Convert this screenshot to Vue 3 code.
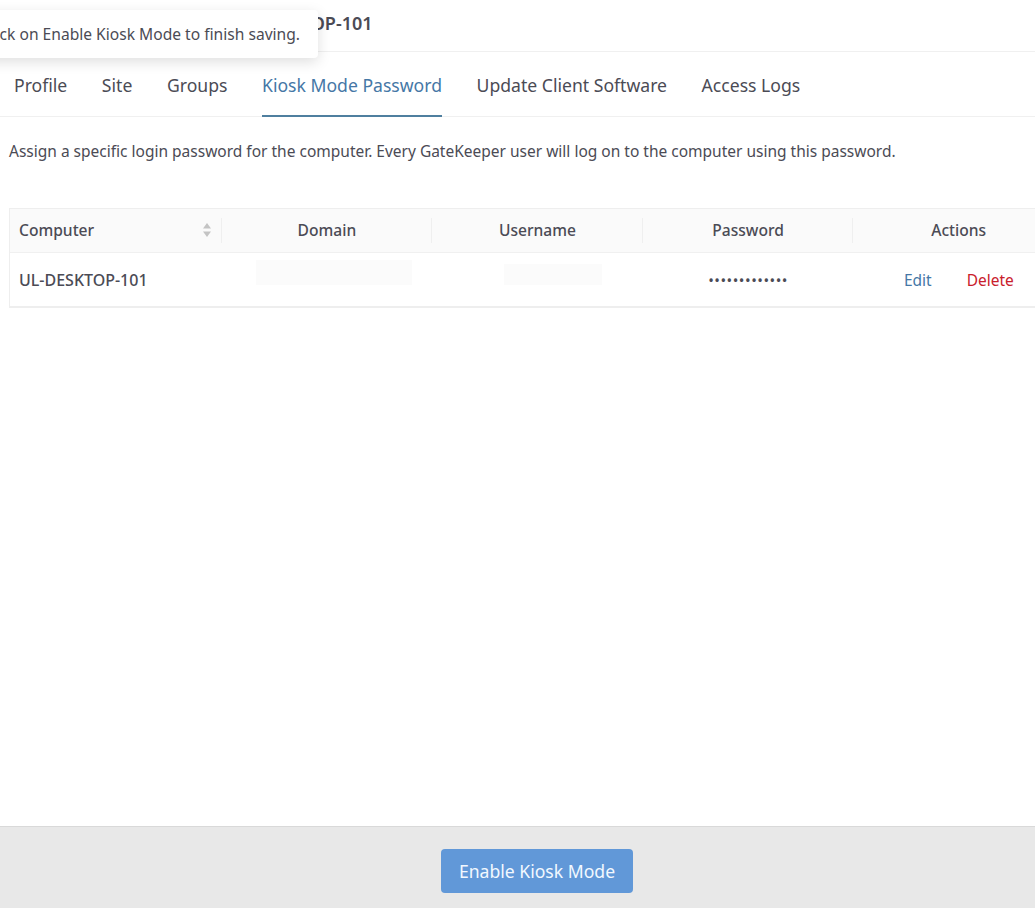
<script setup>
const tabs = ['Profile', 'Site', 'Groups', 'Kiosk Mode Password', 'Update Client Software', 'Access Logs']
const activeTab = 'Kiosk Mode Password'
const columns = ['Domain', 'Username', 'Password', 'Actions']
</script>

<template>
  <div class="viewport">
    <div class="page">
      <div class="toast">Click on Enable Kiosk Mode to finish saving.</div>

      <header class="title-bar">UL-DESKTOP-101</header>

      <nav class="tabs">
        <a v-for="tab in tabs" :key="tab" :class="['tab', { active: tab === activeTab }]">{{ tab }}</a>
      </nav>

      <main class="content">
        <p class="intro">Assign a specific login password for the computer. Every GateKeeper user will log on to the computer using this password.</p>

        <div class="table">
          <div class="row head">
            <div class="cell first">
              <span>Computer</span>
              <svg class="sorter" width="10" height="16" viewBox="0 0 10 16">
                <path d="M5 1 L9 6.5 H1 Z" />
                <path d="M5 15 L9 9.5 H1 Z" />
              </svg>
            </div>
            <div v-for="col in columns" :key="col" class="cell">{{ col }}</div>
          </div>
          <div class="row body">
            <div class="cell first name">UL-DESKTOP-101</div>
            <div class="cell"><span class="masked domain"></span></div>
            <div class="cell"><span class="masked user"></span></div>
            <div class="cell dots">•••••••••••••</div>
            <div class="cell actions">
              <a class="edit">Edit</a>
              <a class="delete">Delete</a>
            </div>
          </div>
        </div>
      </main>

      <footer class="footer">
        <button class="enable" type="button">Enable Kiosk Mode</button>
      </footer>
    </div>
  </div>
</template>

<style>
html, body {
  margin: 0;
  background: #fff;
  overflow: hidden;
}
</style>

<style scoped>
.viewport {
  width: 1035px;
  height: 908px;
  overflow: hidden;
}

.page {
  position: relative;
  width: 1074px;
  height: 908px;
  display: flex;
  flex-direction: column;
  font-family: "Noto Sans", "Open Sans", sans-serif;
  color: #4b4b55;
  background: #fff;
}

.toast {
  position: absolute;
  top: 10px;
  right: 756px;
  height: 48px;
  line-height: 48px;
  padding: 0 18px;
  background: #fff;
  border-radius: 4px;
  font-size: 15.6px;
  white-space: nowrap;
  box-shadow: 0 4px 14px rgba(0, 0, 0, 0.13);
  z-index: 2;
}

.title-bar {
  height: 51px;
  line-height: 46px;
  padding-left: 227px;
  font-size: 18px;
  font-weight: 600;
  border-bottom: 1px solid #f0f0f0;
}

.tabs {
  display: flex;
  gap: 34.6px;
  height: 64px;
  padding-left: 14px;
  border-bottom: 1px solid #f0f0f0;
}

.tab {
  display: block;
  box-sizing: border-box;
  height: 65px;
  line-height: 66px;
  font-size: 17.6px;
  white-space: nowrap;
}

.tab.active {
  color: #4577a6;
  border-bottom: 2px solid #4f7f9f;
}

.content {
  flex: 1;
  padding: 0 9px;
}

.intro {
  margin: 23px 0 46px;
  font-size: 15.5px;
  line-height: 22px;
  white-space: nowrap;
}

.table {
  border: 1px solid #eeeeee;
  border-bottom-width: 2px;
}

.row {
  display: grid;
  grid-template-columns: repeat(5, 210.6px);
}

.head {
  box-sizing: border-box;
  height: 44px;
  padding-bottom: 2px;
  background: #fafafa;
  border-bottom: 1px solid #f0f0f0;
  font-size: 15.6px;
  font-weight: 500;
}

.head .cell {
  position: relative;
}

.head .cell + .cell {
  padding-left: 2px;
}

.head .cell + .cell::before {
  content: "";
  position: absolute;
  top: 9px;
  bottom: 7px;
  left: 0;
  width: 1px;
  background: #efefef;
}

.body {
  height: 53px;
  font-size: 16px;
}

.cell {
  display: flex;
  align-items: center;
  justify-content: center;
}

.first {
  justify-content: space-between;
  padding: 0 9px;
}

.sorter {
  fill: #c4c4c4;
}

.name {
  font-weight: 500;
}

/* blanked-out values in the reference */
.masked {
  display: block;
  background: #fbfbfb;
}

.domain {
  width: 156px;
  height: 25px;
  margin: 0 0 14px 16px;
}

.user {
  width: 98px;
  height: 21px;
  margin: 0 0 10px 34px;
}

.dots {
  font-size: 15px;
  letter-spacing: 0.5px;
  padding-left: 2px;
}

.actions {
  justify-content: flex-start;
  gap: 35px;
  padding-left: 51.5px;
  font-size: 15.5px;
}

.edit {
  color: #4577a6;
}

.delete {
  color: #c9202c;
}

.footer {
  height: 82px;
  display: flex;
  align-items: flex-start;
  justify-content: center;
  padding-top: 22px;
  box-sizing: border-box;
  background: #e8e8e8;
  border-top: 1px solid #d9d9d9;
}

.enable {
  width: 192px;
  height: 44px;
  border: 0;
  border-radius: 4px;
  background: #6198d8;
  color: #f2f8ff;
  font-family: inherit;
  font-size: 17.6px;
}
</style>
